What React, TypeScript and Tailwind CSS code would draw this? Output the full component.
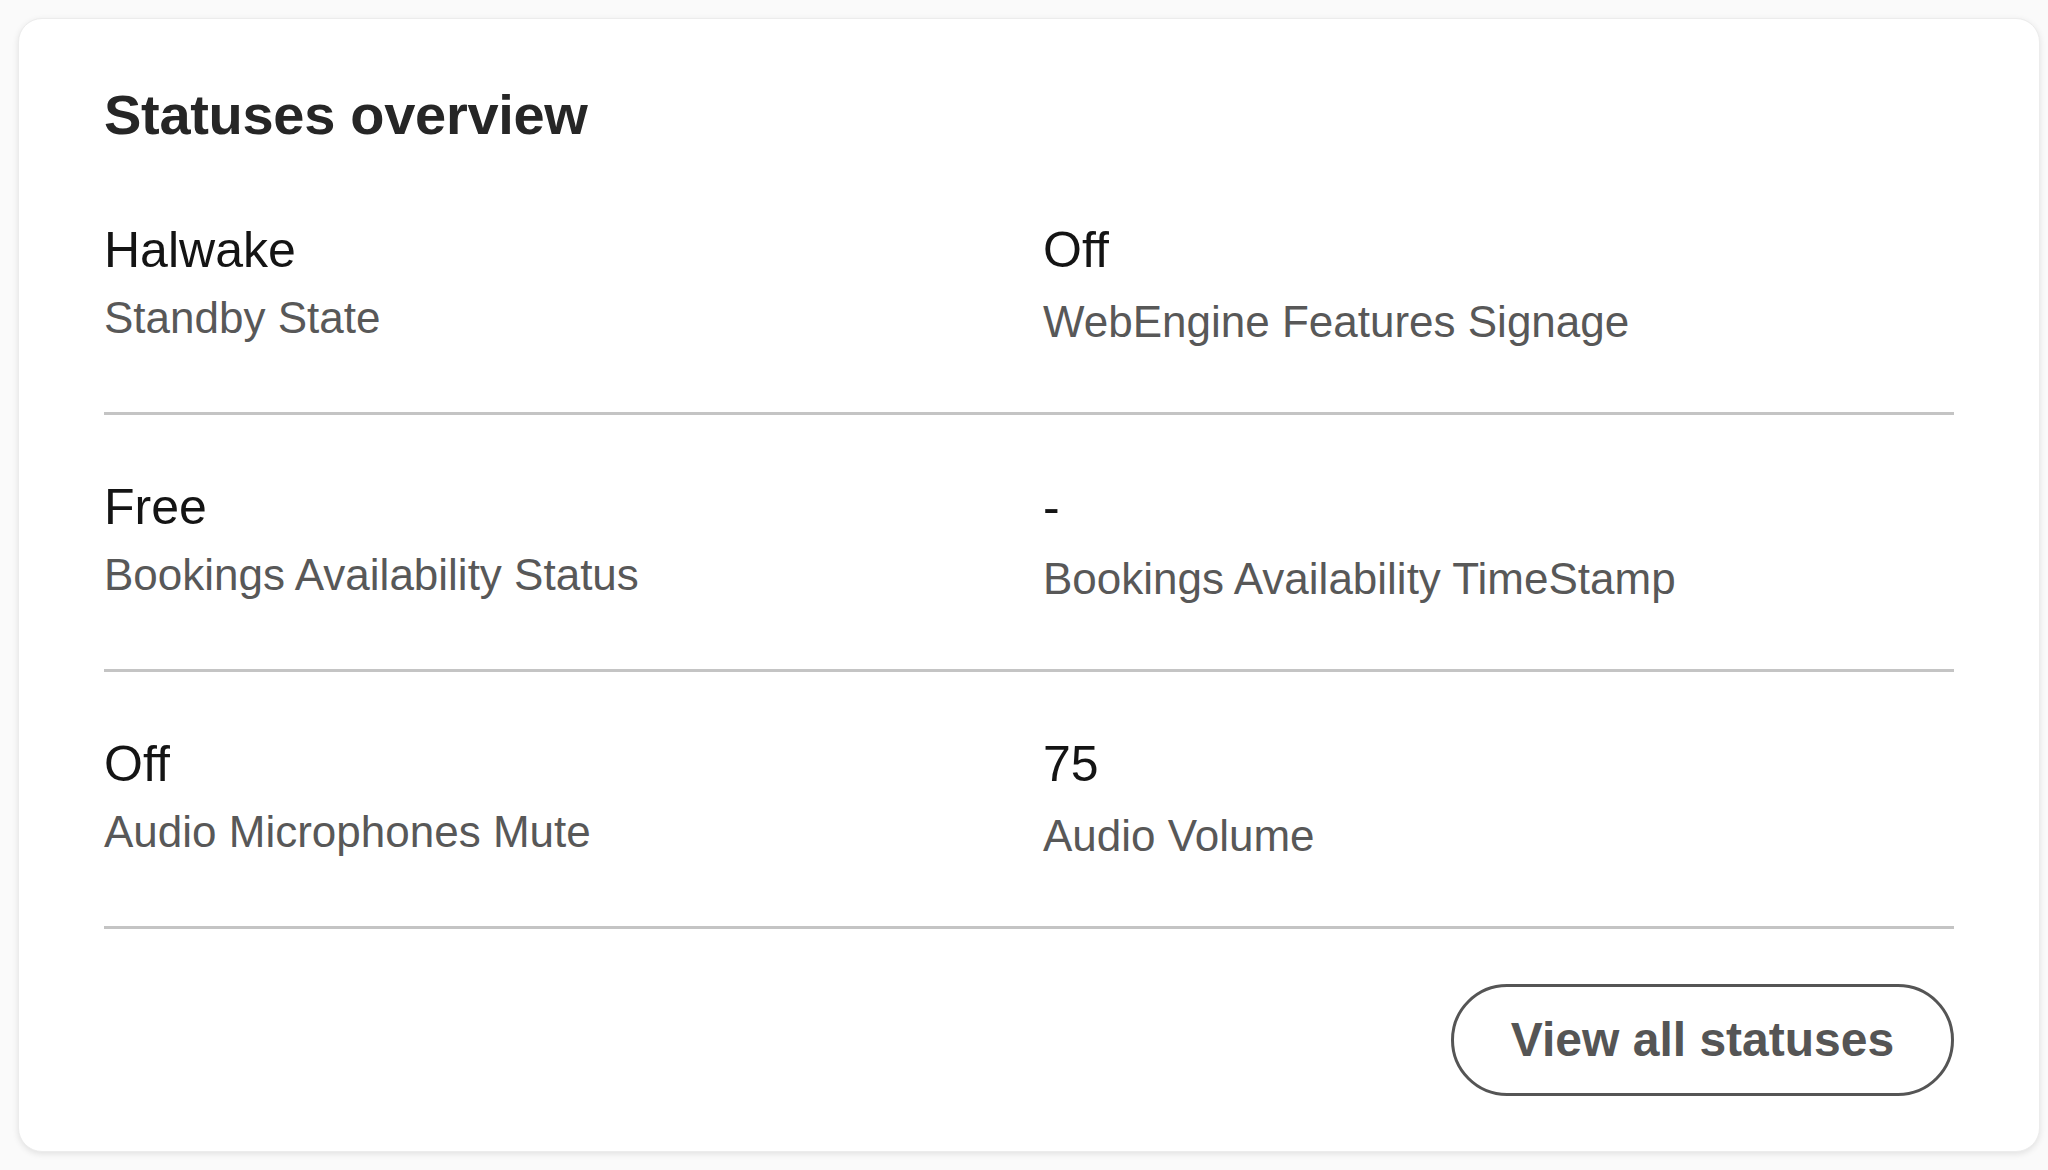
import React from "react";

const rows = [
  [
    { value: "Halwake", label: "Standby State" },
    { value: "Off", label: "WebEngine Features Signage" },
  ],
  [
    { value: "Free", label: "Bookings Availability Status" },
    { value: "-", label: "Bookings Availability TimeStamp" },
  ],
  [
    { value: "Off", label: "Audio Microphones Mute" },
    { value: "75", label: "Audio Volume" },
  ],
];

export default function App() {
  return (
    <div
      className="w-[2048px] h-[1170px] bg-[#fafafa] p-[18px]"
      style={{ fontFamily: '"Liberation Sans", Arial, sans-serif' }}
    >
      <div className="h-[1134px] w-[2022px] bg-white rounded-[24px] border border-[#ececec] shadow-[0_2px_6px_rgba(0,0,0,0.10)] px-[85px] pt-[61px] pb-[55px] flex flex-col">
        <h1 className="text-[56px] leading-[70px] font-bold text-[#262626] tracking-[-0.3px]">
          Statuses overview
        </h1>
        <div className="mt-[8px] flex flex-col">
          {rows.map((row, i) => (
            <div key={i}>
              <div className="grid grid-cols-2 gap-[28px] pt-[62px] pb-[66px]">
                {row.map((c, j) => (
                  <div key={j} className="flex flex-col">
                    <div className="text-[50px] leading-[60px] text-[#141414]">{c.value}</div>
                    <div
                      className={
                        j === 1
                          ? "text-[44px] leading-[56px] text-[#585858] mt-[14px] -mb-[4px]"
                          : "text-[44px] leading-[56px] text-[#585858] mt-[10px]"
                      }
                    >
                      {c.label}
                    </div>
                  </div>
                ))}
              </div>
              <div className="h-[3px] bg-[#c4c4c4]" />
            </div>
          ))}
        </div>
        <div className="flex justify-end mt-[55px]">
          <button className="w-[503px] h-[112px] rounded-full border-[3px] border-[#555555] text-[48px] font-bold text-[#555555] flex items-center justify-center bg-white">
            View all statuses
          </button>
        </div>
      </div>
    </div>
  );
}
